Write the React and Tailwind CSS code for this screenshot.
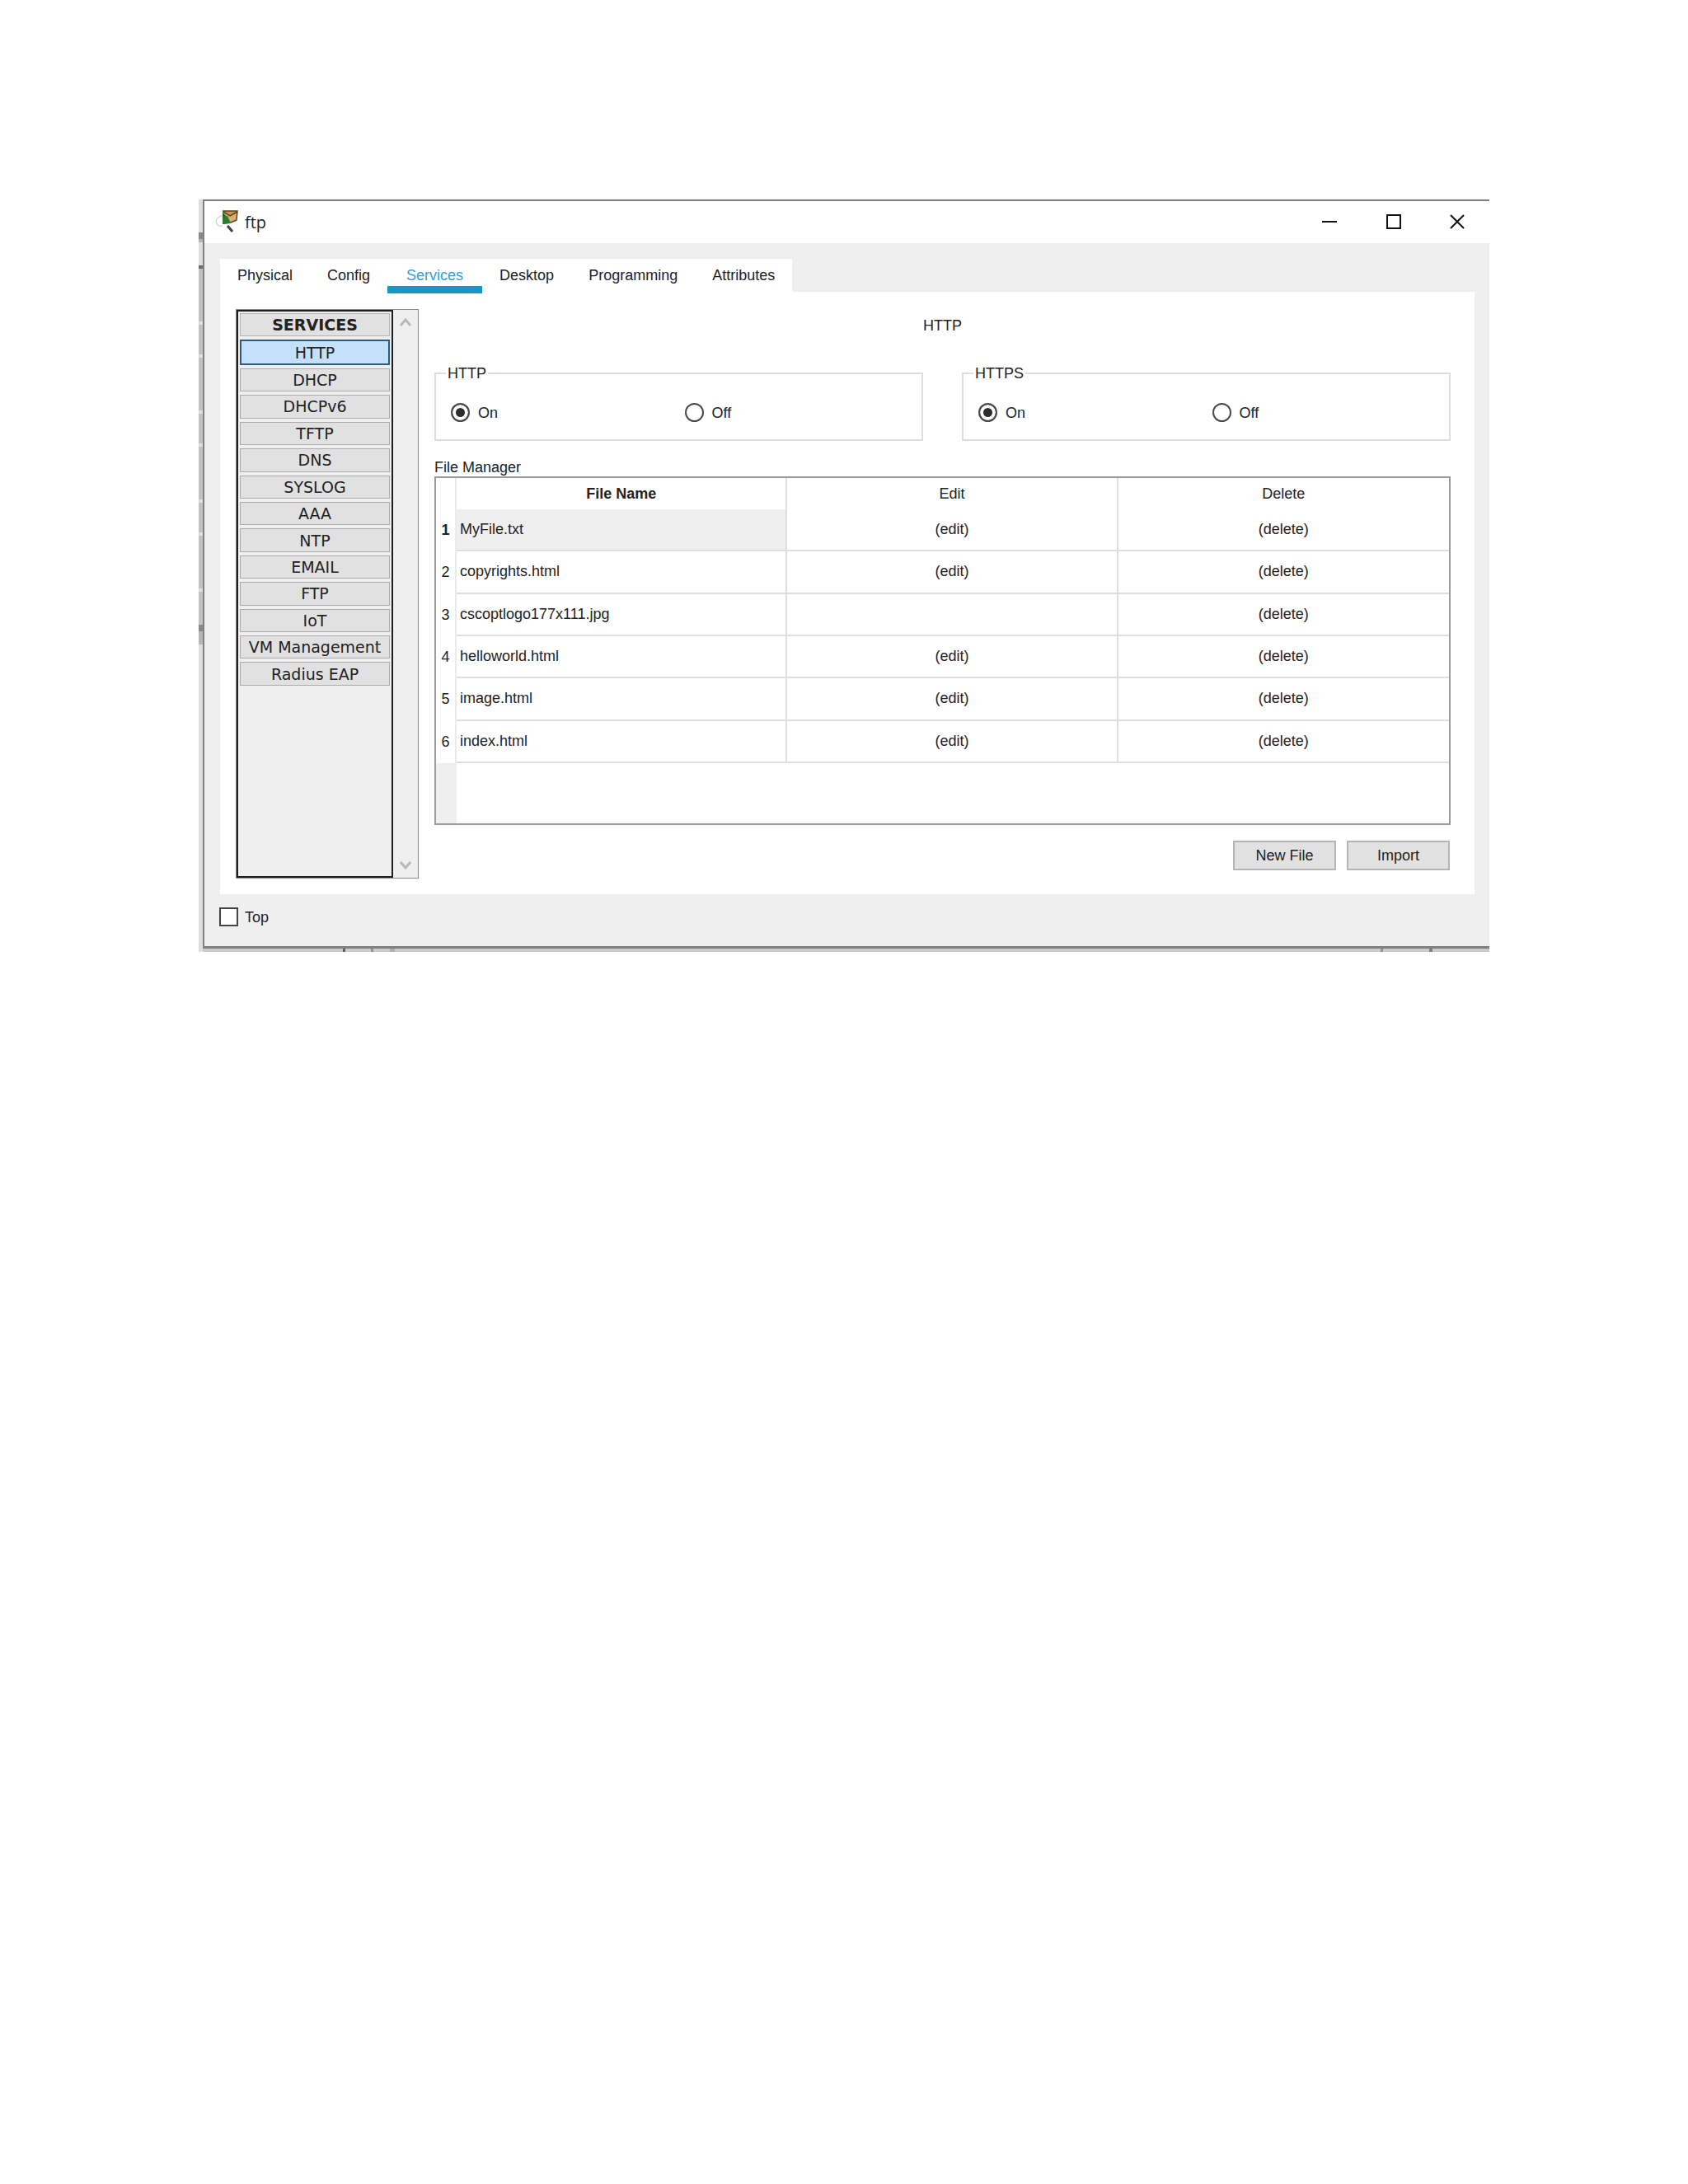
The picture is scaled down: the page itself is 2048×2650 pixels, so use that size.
import { useState } from "react";
import clsx from "clsx";

const tabs = [
  "Physical",
  "Config",
  "Services",
  "Desktop",
  "Programming",
  "Attributes",
];

const services = [
  "HTTP",
  "DHCP",
  "DHCPv6",
  "TFTP",
  "DNS",
  "SYSLOG",
  "AAA",
  "NTP",
  "EMAIL",
  "FTP",
  "IoT",
  "VM Management",
  "Radius EAP",
];

const files = [
  { name: "MyFile.txt", editable: true },
  { name: "copyrights.html", editable: true },
  { name: "cscoptlogo177x111.jpg", editable: false },
  { name: "helloworld.html", editable: true },
  { name: "image.html", editable: true },
  { name: "index.html", editable: true },
];

function AppIcon() {
  return (
    <svg viewBox="0 0 28 28" className="size-7" aria-hidden="true">
      <path
        d="M8 7C3 8 0 12 2 16c1 3 4 4 7 3"
        fill="none"
        stroke="#d6d8d6"
        strokeWidth="1.5"
      />
      <path d="M9 1h18l-1 11-8 4-9 1z" fill="#dcae72" />
      <path d="M9 1h18l-9 6z" fill="#cf9352" />
      <path d="M9 2l10 13-10 2z" fill="#1d6b2a" />
      <path
        d="M9 1h18l-1 11-7 3M10 2l8 5 9-5"
        fill="none"
        stroke="#5d4420"
        strokeWidth="1.5"
      />
      <path d="M9 9l6-2 4 9-10 1z" fill="#2c7d2f" />
      <path d="M15 19l6 7" stroke="#3c423c" strokeWidth="3" />
    </svg>
  );
}

function TitleBar() {
  return (
    <header className="flex h-[51px] items-center bg-white pb-[2px] pl-[13px]">
      <AppIcon />
      <h1 className="ml-2 flex-1 pt-[2px] font-['Open_Sans',sans-serif] text-[20px] leading-6">
        ftp
      </h1>
      <div className="flex">
        <button
          aria-label="Minimize"
          className="flex h-12 w-[78px] items-center justify-center"
        >
          <svg viewBox="0 0 18 18" className="size-[18px]">
            <path d="M0 9h18" stroke="#111" strokeWidth="2" />
          </svg>
        </button>
        <button
          aria-label="Maximize"
          className="flex h-12 w-[77px] items-center justify-center"
        >
          <svg viewBox="0 0 18 18" className="size-[18px]">
            <path
              d="M1 1h16v16H1z"
              fill="none"
              stroke="#111"
              strokeWidth="2"
            />
          </svg>
        </button>
        <button
          aria-label="Close"
          className="flex h-12 w-[78px] items-center justify-center"
        >
          <svg viewBox="0 0 18 18" className="size-[18px]">
            <path d="M1 1l16 16M17 1L1 17" stroke="#111" strokeWidth="2" />
          </svg>
        </button>
      </div>
    </header>
  );
}

function Tabs({ active, onSelect }) {
  return (
    <nav className="flex">
      {tabs.map((tab) => (
        <button
          key={tab}
          onClick={() => onSelect(tab)}
          className={clsx(
            "relative h-10 bg-white pt-px",
            tab === active ? "px-[23px] text-[#2fa3cf]" : "px-[21px]"
          )}
        >
          {tab}
          {tab === active && (
            <span className="absolute inset-x-0 -bottom-0.5 h-[9px] bg-[#1797c6]" />
          )}
        </button>
      ))}
    </nav>
  );
}

function ServiceList({ active, onSelect }) {
  return (
    <aside className="flex h-[691px] border border-[#8a8a8a] bg-[#f0eff0]">
      <div className="w-[190px] border-2 border-[#1e1e1e] px-[2px] pt-[2px] font-['DejaVu_Sans',sans-serif] text-[19px]">
        <div className="flex h-[452px] flex-col gap-1">
          <h2 className="flex flex-1 items-center justify-center border border-[#b4b4b4] bg-[#e1e1e1] leading-5 font-bold">
            SERVICES
          </h2>
          {services.map((service) => (
            <button
              key={service}
              onClick={() => onSelect(service)}
              className={clsx(
                "flex flex-1 items-center justify-center leading-5 whitespace-nowrap",
                service === active
                  ? "border-2 border-[#33597a] bg-[#c5e0fa]"
                  : "border border-[#acacac] bg-[#e1e1e1]"
              )}
            >
              {service}
            </button>
          ))}
        </div>
      </div>
      <div className="flex w-[30px] flex-col items-center justify-between py-[9px]">
        <button aria-label="Scroll up">
          <svg viewBox="0 0 14 12" className="h-3 w-[14px]">
            <path d="M1 10l6-7 6 7" fill="none" stroke="#b9b9b9" strokeWidth="3" />
          </svg>
        </button>
        <button aria-label="Scroll down">
          <svg viewBox="0 0 14 12" className="h-3 w-[14px]">
            <path d="M1 2l6 7 6-7" fill="none" stroke="#b9b9b9" strokeWidth="3" />
          </svg>
        </button>
      </div>
    </aside>
  );
}

function ToggleGroup({ label }) {
  return (
    <fieldset className="border-2 border-[#dfdde0] pr-1 pb-[21px] pl-[18px]">
      <legend className="-ml-[6px] px-[2px] leading-5">{label}</legend>
      <div className="flex pt-[26px]">
        {["On", "Off"].map((option) => (
          <label key={option} className="flex flex-1 items-center gap-[10px]">
            <input
              type="radio"
              name={label}
              defaultChecked={option === "On"}
              className="size-[23px] appearance-none rounded-full border-2 border-[#4a4a4a] bg-white checked:bg-[#2c2c2c] checked:shadow-[inset_0_0_0_4px_white]"
            />
            <span className="leading-5">{option}</span>
          </label>
        ))}
      </div>
    </fieldset>
  );
}

function FileTable() {
  return (
    <div className="flex h-[423px] flex-col border-2 border-[#9b9a9d]">
      <table className="h-[346px] w-full table-fixed border-separate border-spacing-0">
        <thead>
          <tr className="h-[38px]">
            <th className="w-[25px] border-r-2 border-[#ebeaec]" />
            <th className="border-r-2 border-[#dfdee0] font-bold">
              File Name
            </th>
            <th className="border-r-2 border-[#dfdee0] font-normal">Edit</th>
            <th className="font-normal">Delete</th>
          </tr>
        </thead>
        <tbody>
          {files.map((file, index) => (
            <tr key={file.name}>
              <th
                className={clsx(
                  "border-r-2 border-[#ebeaec] text-center",
                  index === 0 ? "font-bold" : "font-normal"
                )}
              >
                {index + 1}
              </th>
              <td
                className={clsx(
                  "border-r-2 border-b-2 border-[#dfdee0] pl-1",
                  index === 0 && "bg-[#f0eff0]"
                )}
              >
                {file.name}
              </td>
              <td className="border-r-2 border-b-2 border-[#dfdee0] text-center">
                {file.editable && <button>(edit)</button>}
              </td>
              <td className="border-b-2 border-[#dfdee0] text-center">
                <button>(delete)</button>
              </td>
            </tr>
          ))}
        </tbody>
      </table>
      <div className="w-[25px] flex-1 bg-[#f0eff0]" />
    </div>
  );
}

function ServicePanel({ service }) {
  return (
    <section className="flex min-w-0 flex-1 flex-col">
      <h2 className="h-10 text-center leading-10">{service}</h2>
      <div className="mt-7 grid grid-cols-2 gap-[47px]">
        <ToggleGroup label="HTTP" />
        <ToggleGroup label="HTTPS" />
      </div>
      <h3 className="mt-[21px] leading-[22px]">File Manager</h3>
      <FileTable />
      <div className="mt-[19px] flex justify-end gap-[13px] pr-px">
        <button className="h-9 w-[125px] border-2 border-[#b5b5b5] bg-[#e1e1e1]">
          New File
        </button>
        <button className="h-9 w-[125px] border-2 border-[#b5b5b5] bg-[#e1e1e1]">
          Import
        </button>
      </div>
    </section>
  );
}

// Slice of whatever window lies behind this one
function BackdropLeft() {
  return (
    <div className="flex w-[5px] flex-col bg-[#dedede]">
      <div className="h-10" />
      <div className="h-2 bg-[#8a8a8a]" />
      <div className="h-1 bg-[#b5b5b5]" />
      <div className="h-7" />
      <div className="h-1 bg-[#6b6b6b]" />
      <div className="h-16 bg-[#c2c2c2]" />
      <div className="h-1" />
      <div className="h-9 bg-[#c2c2c2]" />
      <div className="h-1" />
      <div className="h-16 bg-[#c2c2c2]" />
      <div className="h-1" />
      <div className="h-9 bg-[#c2c2c2]" />
      <div className="h-1" />
      <div className="h-16 bg-[#c2c2c2]" />
      <div className="h-1" />
      <div className="h-9 bg-[#c2c2c2]" />
      <div className="h-1" />
      <div className="h-16 bg-[#c2c2c2]" />
      <div className="h-1" />
      <div className="h-10 bg-[#c2c2c2]" />
      <div className="h-2 bg-[#8a8a8a]" />
      <div className="h-4 bg-[#b5b5b5]" />
    </div>
  );
}

function BackdropBottom() {
  return (
    <div className="flex h-1 bg-[#cdcbcd]">
      <div className="w-[170px]" />
      <div className="w-[3px] bg-[#5f5f5f]" />
      <div className="w-[31px]" />
      <div className="w-[3px] bg-[#959395]" />
      <div className="w-5" />
      <div className="w-[6px] bg-[#b0aeb0]" />
      <div className="flex-1" />
      <div className="w-[3px] bg-[#959395]" />
      <div className="w-14" />
      <div className="w-1 bg-[#858385]" />
      <div className="w-[69px]" />
    </div>
  );
}

export default function App() {
  const [tab, setTab] = useState("Services");
  const [service, setService] = useState("HTTP");

  return (
    <div className="bg-white px-[241px] pt-[242px] font-['Liberation_Sans',Arial,sans-serif] text-[18px] text-[#222]">
      <div className="flex">
        <BackdropLeft />
        <div className="min-w-0 flex-1">
          <div className="border-t-2 border-b-3 border-l-2 border-[#808080] bg-[#f0eff0]">
            <TitleBar />
            <main className="pt-[19px] pr-[18px] pl-[19px]">
              <Tabs active={tab} onSelect={setTab} />
              <div className="flex gap-[19px] bg-white pt-[21px] pr-[29px] pb-[19px] pl-[19px]">
                <ServiceList active={service} onSelect={setService} />
                <ServicePanel service={service} />
              </div>
            </main>
            <footer className="flex h-[63px] items-center pb-2 pl-[18px]">
              <label className="flex items-center gap-2">
                <input
                  type="checkbox"
                  className="size-[23px] appearance-none border-2 border-[#444] bg-white checked:bg-[#444]"
                />
                <span className="leading-5">Top</span>
              </label>
            </footer>
          </div>
          <BackdropBottom />
        </div>
      </div>
    </div>
  );
}
